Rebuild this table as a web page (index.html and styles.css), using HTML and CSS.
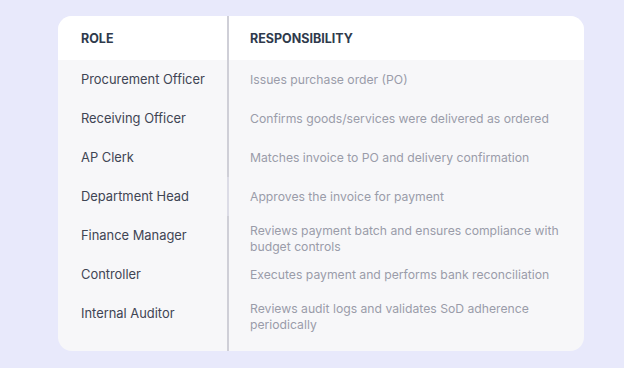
FILE: index.html
```html
<!DOCTYPE html>
<html>
<head>
<meta charset="utf-8">
<link rel="stylesheet" href="styles.css">
</head>
<body>
<div class="card">
  <table class="sod">
    <thead>
      <tr><th class="role">ROLE</th><th class="resp">RESPONSIBILITY</th></tr>
    </thead>
    <tbody>
      <tr><td class="role">Procurement Officer</td><td class="resp">Issues purchase order (PO)</td></tr>
      <tr><td class="role">Receiving Officer</td><td class="resp">Confirms goods/services were delivered as ordered</td></tr>
      <tr><td class="role">AP Clerk</td><td class="resp">Matches invoice to PO and delivery confirmation</td></tr>
      <tr><td class="role soft">Department Head</td><td class="resp">Approves the invoice for payment</td></tr>
      <tr><td class="role">Finance Manager</td><td class="resp two">Reviews payment batch and ensures compliance with budget controls</td></tr>
      <tr><td class="role">Controller</td><td class="resp">Executes payment and performs bank reconciliation</td></tr>
      <tr><td class="role">Internal Auditor</td><td class="resp two">Reviews audit logs and validates SoD adherence periodically</td></tr>
      <tr class="filler"><td class="role"></td><td class="resp"></td></tr>
    </tbody>
  </table>
</div>
</body>
</html>
```
FILE: styles.css
```css
html, body {
  margin: 0;
  padding: 0;
}
body {
  background: #e8e9fb;
  width: 624px;
  height: 368px;
  padding: 16px 40px 0 58px;
  box-sizing: border-box;
  font-family: "Inter", "Noto Sans", sans-serif;
}
.card {
  width: 526px;
  height: 335px;
  background: #f7f7f9;
  border-radius: 14px;
  overflow: hidden;
}
.sod {
  width: 100%;
  border-collapse: collapse;
  table-layout: fixed;
}
.sod th {
  background: #ffffff;
  height: 44px;
  padding: 0;
  text-align: left;
  font-size: 12.5px;
  font-weight: 700;
  color: #2f3a4c;
  vertical-align: middle;
}
.sod td {
  height: 39px;
  padding: 0;
  vertical-align: middle;
}
.sod .role {
  width: 146px;
  padding-left: 23px;
  border-right: 2px solid #cfcfd7;
}
.sod .resp {
  padding-left: 21px;
  padding-right: 14px;
}
.sod td.role {
  font-size: 12.9px;
  color: #3f4554;
}
.sod td.role.soft {
  border-right-color: #dcdce6;
}
.sod td.resp {
  font-size: 12.2px;
  line-height: 17px;
  color: #9a9ca9;
}
.sod td.resp.two {
  height: 33px;
  line-height: 16px;
  padding-top: 6px;
}
.sod tr.filler td {
  height: 18px;
}
```
